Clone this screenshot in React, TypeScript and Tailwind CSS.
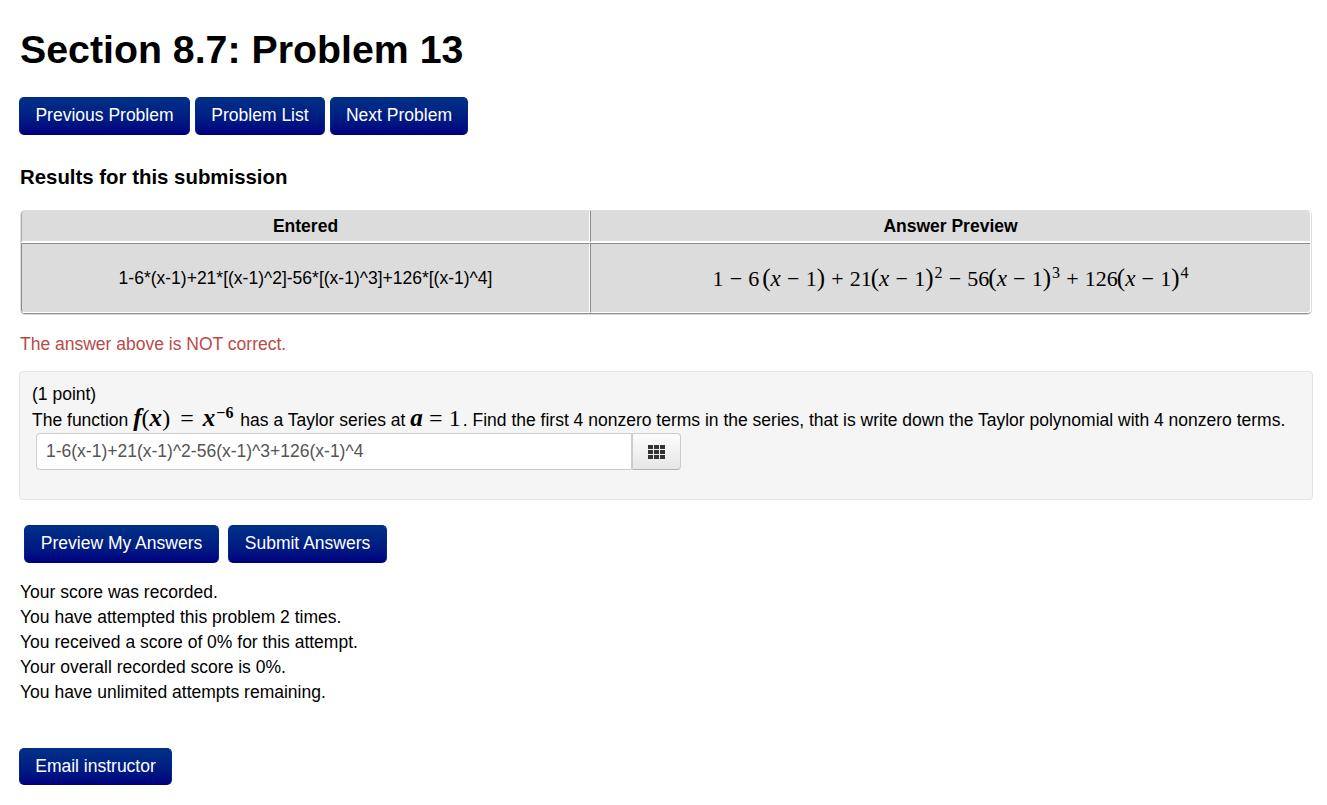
const navyButton =
    'whitespace-nowrap rounded-[5px] border border-[#012a85] border-b-[#00006e] bg-gradient-to-b from-[#003087] to-[#00007f] text-white text-[17.5px] leading-none';

const mathFont = "font-['Liberation_Serif',serif] tracking-normal";

function Var({ children }: { children: string }) {
    return <i className="text-[1.05em]">{children}</i>;
}

function Op({ children }: { children: string }) {
    return <span className="mx-[6.2px]">{children}</span>;
}

function Binomial({ tight = false }: { tight?: boolean }) {
    return (
        <span className={tight ? 'ml-[-1px]' : 'ml-[3px]'}>
            <span className="text-[25px] leading-none">(</span>
            <Var>x</Var>
            <Op>−</Op>1<span className="text-[25px] leading-none">)</span>
        </span>
    );
}

function Exp({ children }: { children: string }) {
    return <sup className="ml-px text-[16px]">{children}</sup>;
}

export default function App() {
    return (
        <div className="min-h-[805px] bg-white pl-[19px] pr-[14px] font-['Liberation_Sans',Arial,sans-serif] text-[17.5px] text-black leading-[25px]">
            <h1 className="pl-px pt-[26px] pb-px text-[39.3px] font-bold leading-[46px]">Section 8.7: Problem 13</h1>

            <div className="mt-[24px] flex gap-[5px]">
                <button className={`${navyButton} h-[38px] w-[171px]`}>Previous Problem</button>
                <button className={`${navyButton} h-[38px] w-[130px]`}>Problem List</button>
                <button className={`${navyButton} h-[38px] w-[138px]`}>Next Problem</button>
            </div>

            <h2 className="mt-[30px] pl-px text-[20.4px] font-bold leading-[25px]">Results for this submission</h2>

            {/* results table */}
            <div className="mt-[20px] px-px">
                <table className="w-full table-fixed border-separate border-spacing-0 rounded-[5px] border border-[#dedede] border-b-[#8c8c8c] bg-white shadow-[0_1px_0_rgba(0,0,0,0.15)]">
                    <colgroup>
                        <col className="w-[569px]" />
                        <col />
                    </colgroup>
                    <thead>
                        <tr>
                            <th className="h-[32px] border-b-2 border-l border-r border-b-white border-l-[#b0b0b0] border-r-white bg-[#dcdcdc] text-[17.5px] font-bold rounded-tl-[4px]">Entered</th>
                            <th className="h-[32px] border-b-2 border-l border-r border-b-white border-l-[#8c8c8c] border-r-white bg-[#dcdcdc] text-[17.5px] font-bold rounded-tr-[4px]">Answer Preview</th>
                        </tr>
                    </thead>
                    <tbody>
                        <tr>
                            <td className="h-[70px] border-b border-l border-r border-t border-b-white border-l-[#8c8c8c] border-r-white border-t-[#8c8c8c] bg-[#dcdcdc] text-center rounded-bl-[4px]">1-6*(x-1)+21*[(x-1)^2]-56*[(x-1)^3]+126*[(x-1)^4]</td>
                            <td className={`h-[70px] border-b border-l border-r border-t border-b-white border-l-[#8c8c8c] border-r-white border-t-[#8c8c8c] bg-[#dcdcdc] text-center text-[22px] rounded-br-[4px] ${mathFont}`}>
                                1<Op>−</Op>6<Binomial /><Op>+</Op>21<Binomial tight /><Exp>2</Exp><Op>−</Op>56<Binomial tight /><Exp>3</Exp><Op>+</Op>126<Binomial tight /><Exp>4</Exp>
                            </td>
                        </tr>
                    </tbody>
                </table>
            </div>

            <p className="mt-[18px] pl-px text-[#b94a48]">The answer above is NOT correct.</p>

            {/* problem body */}
            <div className="mt-[14px] h-[129px] rounded-[4px] border border-[#e5e5e5] bg-[#f5f5f5] pl-3 pt-[10px]">
                <div>(1 point)</div>
                <div className="h-[26px] whitespace-nowrap pt-px">
                    The function{' '}
                    <span className={`mr-[2px] text-[24px] leading-[0] ${mathFont}`}>
                        <b><Var>f</Var></b>(<b><Var>x</Var></b>)<span className="ml-[10px] mr-[9px]">=</span><b><Var>x</Var></b>
                        <sup className="ml-px text-[16px] font-bold leading-[0]">−6</sup>
                    </span>{' '}
                    has a Taylor series at{' '}
                    <span className={`mr-[2px] text-[24px] leading-[0] ${mathFont}`}>
                        <b><Var>a</Var></b><Op>=</Op>1
                    </span>
                    . Find the first 4 nonzero terms in the series, that is write down the Taylor polynomial with 4 nonzero terms.
                </div>
                <div className="ml-1 flex h-[37px] w-[645px]">
                    <input
                        readOnly
                        value="1-6(x-1)+21(x-1)^2-56(x-1)^3+126(x-1)^4"
                        className="h-full w-[596px] rounded-l-[4px] border border-[#cccccc] bg-white px-[9px] text-[#555555] outline-none"
                    />
                    <button className="flex h-full w-[49px] items-center justify-center rounded-r-[4px] border border-[#cccccc] border-b-[#b3b3b3] bg-gradient-to-b from-[#fdfdfd] to-[#e6e6e6]">
                        <svg width="18" height="14" viewBox="0 0 18 14" fill="#333333">
                            {[0, 5, 10].map((y) =>
                                [0, 6, 12].map((x) => <rect key={`${x}-${y}`} x={x} y={y} width="5" height="4" />),
                            )}
                        </svg>
                    </button>
                </div>
            </div>

            <div className="ml-[5px] mt-[25px] flex gap-[9px]">
                <button className={`${navyButton} h-[38px] w-[195px]`}>Preview My Answers</button>
                <button className={`${navyButton} h-[38px] w-[159px]`}>Submit Answers</button>
            </div>

            <div className="mt-[17px] pl-px">
                <div>Your score was recorded.</div>
                <div>You have attempted this problem 2 times.</div>
                <div>You received a score of 0% for this attempt.</div>
                <div>Your overall recorded score is 0%.</div>
                <div>You have unlimited attempts remaining.</div>
            </div>

            <button className={`${navyButton} mt-[43px] block h-[37px] w-[153px]`}>Email instructor</button>
        </div>
    );
}
